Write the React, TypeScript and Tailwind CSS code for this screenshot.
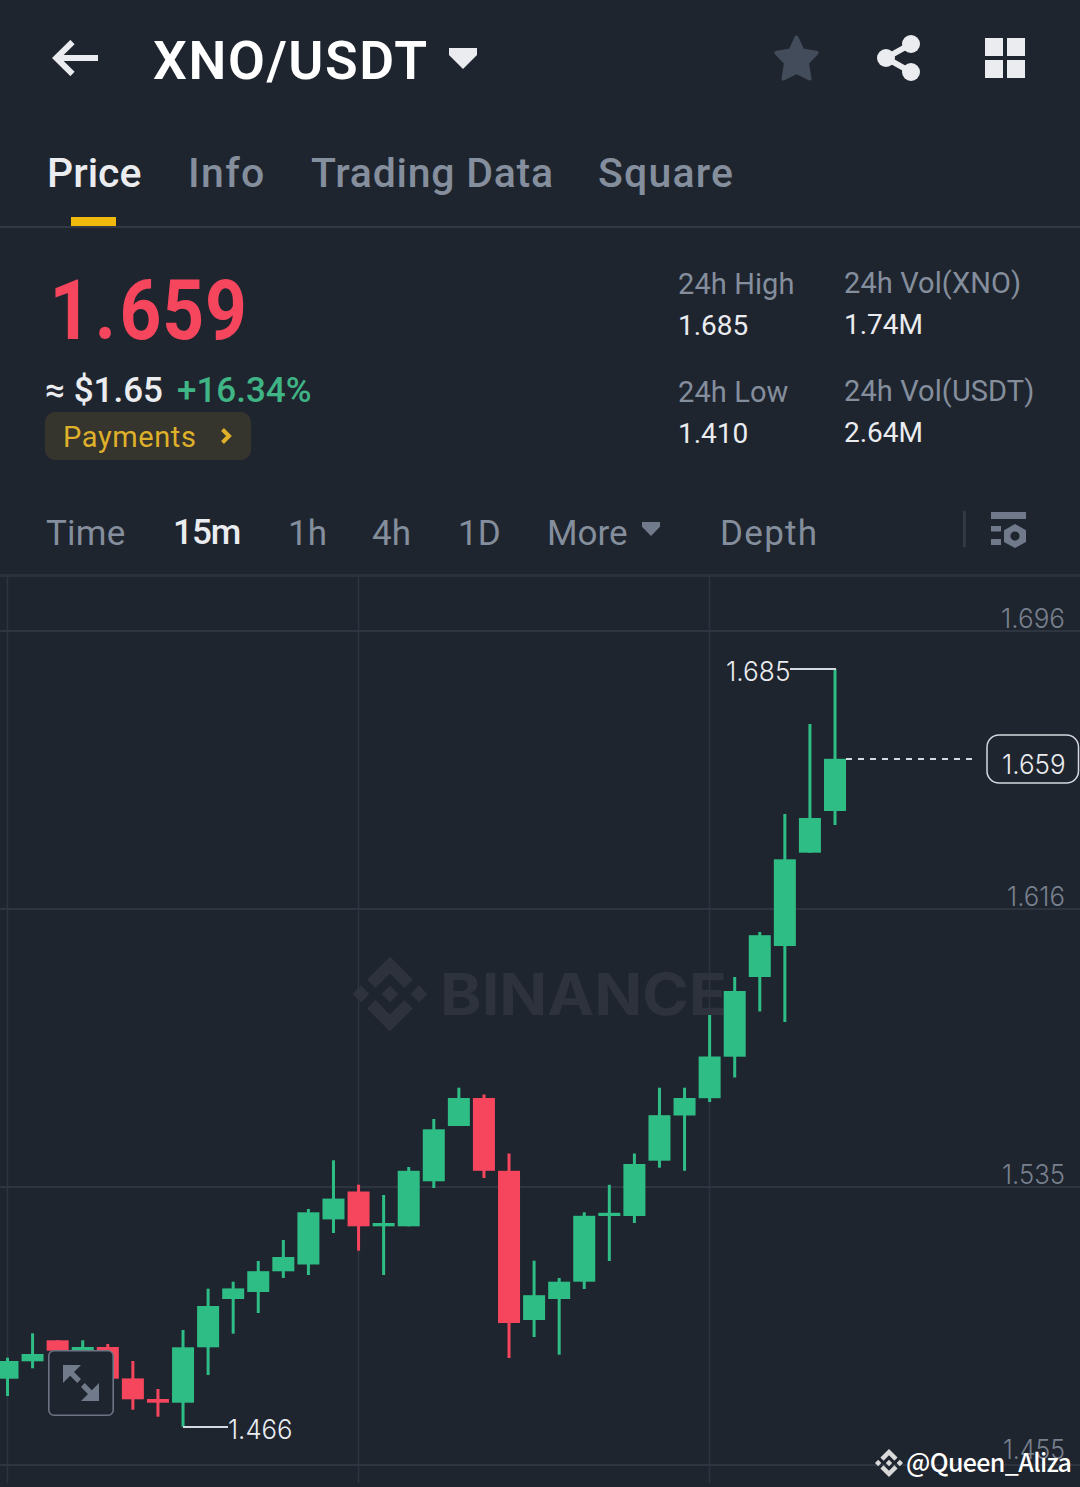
import React, { useState } from 'react';
import { SiBinance } from 'react-icons/si';

const tabs = [
  { name: 'Price', style: 'w-[141px]' },
  { name: 'Info', style: 'w-[123px] tracking-[1.4px]' },
  { name: 'Trading Data', style: 'w-[287px] tracking-[0.75px]' },
  { name: 'Square', style: 'w-[160px] tracking-[1.2px]' },
]

const stats = [
  { label: '24h High', value: '1.685', style: 'pt-[1px]' },
  { label: '24h Vol(XNO)', value: '1.74M', style: '' },
  { label: '24h Low', value: '1.410', style: 'pt-[1px]' },
  { label: '24h Vol(USDT)', value: '2.64M', style: '' },
]

const intervals = [
  { name: 'Time', style: 'w-[127px] tracking-[0.2px]' },
  { name: '15m', style: 'w-[115px] tracking-[-1px]' },
  { name: '1h', style: 'w-[84px]' },
  { name: '4h', style: 'w-[86px]' },
  { name: '1D', style: 'w-[89px]' },
]

// high, body top, body bottom, low, falling
const candles: [number, number, number, number, boolean?][] = [
  [1357.7, 1361, 1378.7, 1396],
  [1333.3, 1354, 1361.3, 1368.3],
  [1340.3, 1340.3, 1350.7, 1350.7, true],
  [1340.3, 1347, 1358, 1362],
  [1344, 1347, 1378.7, 1378.7, true],
  [1361, 1378.4, 1399.3, 1409.7, true],
  [1389, 1399, 1402.7, 1416.7, true],
  [1330, 1347.3, 1402.7, 1426.7],
  [1288.7, 1306, 1347.3, 1375],
  [1281.7, 1288.4, 1299, 1333.7],
  [1261, 1271.2, 1292, 1313],
  [1240, 1257, 1271.3, 1278],
  [1209, 1212.3, 1264.5, 1275],
  [1160.3, 1198.6, 1219.4, 1233],
  [1184.7, 1191.5, 1226.3, 1250.7, true],
  [1195, 1223, 1226.3, 1275],
  [1167, 1170.8, 1226.3, 1226.3],
  [1119, 1129.3, 1181.3, 1188],
  [1087.7, 1098, 1126, 1126],
  [1094.5, 1098, 1170.8, 1178, true],
  [1153.5, 1170.8, 1323, 1358, true],
  [1260.7, 1295.2, 1320, 1337],
  [1278, 1281.7, 1299, 1354.7],
  [1212.3, 1215.8, 1281.7, 1289],
  [1184.8, 1212.8, 1216, 1261],
  [1153.5, 1164, 1216, 1223],
  [1087.7, 1115.2, 1160.7, 1167.7],
  [1087.7, 1098, 1115.5, 1170.8],
  [1015, 1056.5, 1098.2, 1102],
  [977, 991, 1056.7, 1077.5],
  [932, 935.2, 977, 1011.5],
  [814, 859.3, 946, 1022],
  [724, 818, 852.7, 852.7],
  [669, 758.8, 811, 825],
]

const levels = [
  { y: 631, text: '1.696', x: 1001, base: 628, length: 64 },
  { y: 909, text: '1.616', x: 1007, base: 906, length: 58 },
  { y: 1187, text: '1.535', x: 1002, base: 1184, length: 63 },
  { y: 1465, text: '1.455', x: 1003, base: 1459, length: 62 },
]

function Caret({ className }: { className: string }) {
  return (
    <svg className={className} viewBox="0 0 28 21" preserveAspectRatio="none" fill="currentColor">
      <path d="M0 0H28V7L14 21L0 7Z" />
    </svg>
  )
}

function Header() {
  return (
    <div className="flex h-[118px] items-center pl-[52px] pr-[55px] pb-[2px] text-[#eaecef]">
      <svg className="h-9 w-[46px]" viewBox="0 0 46 36" fill="none" stroke="currentColor" strokeWidth="6">
        <path d="M4 18H46M20.5 2L4.2 18L20.5 34" />
      </svg>
      <div className="ml-[55px] w-[274px] whitespace-nowrap pt-[5px] text-[53.5px] font-semibold leading-none tracking-[1.6px] text-white">
        XNO/USDT
      </div>
      <Caret className="ml-[22px] h-[21px] w-7" />
      <svg className="ml-auto h-[46px] w-[45px] text-[#434c5a]" viewBox="0 0 45 46" fill="currentColor" stroke="currentColor" strokeWidth="4" strokeLinejoin="round">
        <path d="M22.5 2.5L28.5 15.5L42.5 17.8L33 28L35.5 43.5L22.5 37L9.5 43.5L12 28L2.5 17.8L16.5 15.5Z" />
      </svg>
      <svg className="ml-[58px] h-[46px] w-[43px]" viewBox="0 0 43 46" fill="currentColor">
        <path d="M34 9L9 23L34 37" fill="none" stroke="currentColor" strokeWidth="6" />
        <circle cx="9" cy="23" r="9" />
        <circle cx="34" cy="9" r="9" />
        <circle cx="34" cy="37" r="9" />
      </svg>
      <div className="ml-[65px] grid grid-cols-2 gap-1">
        <div className="h-[18px] w-[18px] bg-current" />
        <div className="h-[18px] w-[18px] bg-current" />
        <div className="h-[18px] w-[18px] bg-current" />
        <div className="h-[18px] w-[18px] bg-current" />
      </div>
    </div>
  )
}

function Chart() {
  return (
    <svg
      className="block h-[910px] w-[1080px]"
      viewBox="0 577 1080 910"
      fontFamily="Inter, 'Liberation Sans', sans-serif"
      fontWeight={300}
      fontSize={26.5}
    >
      <SiBinance x={352.5} y={956.5} size={75} color="#2e323d" />
      <text x={440} y={1015} fill="#2e323d" fontWeight={700} fontSize={58} textLength={287} lengthAdjust="spacingAndGlyphs">BINANCE</text>

      <g stroke="#2f3540">
        {[7.5, 358.5, 709.5].map((x) => (
          <line key={x} x1={x} x2={x} y1={577} y2={1483} strokeWidth={1.5} />
        ))}
        {levels.map((level) => (
          <line key={level.y} x1={0} x2={1080} y1={level.y} y2={level.y} strokeWidth={2} />
        ))}
      </g>

      {levels.map((level) => (
        <text key={level.text} x={level.x} y={level.base} fill="#78808e" textLength={level.length} lengthAdjust="spacingAndGlyphs">{level.text}</text>
      ))}

      {candles.map(([high, top, bottom, low, falling], i) => {
        const x = 7.5 + i * 25.076
        return (
          <g key={i} fill={falling ? '#f6465d' : '#2ebd85'}>
            <rect x={x - 1.5} y={high} width={3} height={low - high} />
            <rect x={x - 11} y={top} width={22} height={bottom - top} />
          </g>
        )
      })}

      <g stroke="#d5d8de" strokeWidth={2}>
        <line x1={790} x2={836} y1={669} y2={669} />
        <line x1={183} x2={228} y1={1427} y2={1427} />
        <line x1={846} x2={973} y1={759} y2={759} strokeDasharray="6 6" />
        <rect x={987} y={735} width={91.5} height={48} rx={12} fill="none" strokeWidth={1.5} />
      </g>
      <g fill="#eaecef">
        <text x={726} y={681} textLength={64.5} lengthAdjust="spacingAndGlyphs">1.685</text>
        <text x={228} y={1439} textLength={64.5} lengthAdjust="spacingAndGlyphs">1.466</text>
        <text x={1002} y={774} textLength={63.5} lengthAdjust="spacingAndGlyphs">1.659</text>
      </g>

      <rect x={48.8} y={1350.8} width={64.4} height={64.4} rx={5} fill="#1f252f" stroke="#6c7484" strokeWidth={1.6} />
      <g fill="#717a8b">
        <path d="M0 0H18L11 7L18 14L14.3 18L7.2 10.8L0 18Z" transform="translate(63 1365)" />
        <path d="M0 0H18L11 7L18 14L14.3 18L7.2 10.8L0 18Z" transform="translate(99 1401) rotate(180)" />
      </g>

      <SiBinance x={875} y={1449} size={28} color="#d9d9d9" />
      <text x={906} y={1472} fill="#ffffff" fontFamily="'Noto Sans CJK SC', 'Noto Sans', sans-serif" fontWeight={500} fontSize={25} textLength={166}>@Queen_Aliza</text>
    </svg>
  )
}

export default function App() {
  const [tab, setTab] = useState('Price');
  const [interval, setInterval] = useState('15m');

  return (
    <div className="h-[1487px] w-[1080px] overflow-hidden bg-[#1f252f] font-[Roboto,sans-serif] text-[#848e9c]">
      <Header />

      <div className="flex h-[110px] border-b-2 border-[#333944] pl-[47px]">
        {tabs.map((item) => (
          <div
            key={item.name}
            className={`${item.style} ${tab === item.name ? 'text-[#eaecef]' : ''} relative cursor-pointer whitespace-nowrap pt-[31px] text-[41px] font-medium leading-[48px]`}
            onClick={() => setTab(item.name)}
          >
            {item.name}
            {tab === item.name && <div className="absolute bottom-0 left-6 h-[9px] w-[45px] bg-[#f0b90b]" />}
          </div>
        ))}
      </div>

      <div className="flex h-[262px] justify-between pl-[45px]">
        <div className="pt-[34px]">
          <div className="h-[98px] origin-left scale-x-[0.88] pl-[5px] text-[83px] font-bold leading-[98px] tracking-[1px] text-[#f6465d]">
            1<span className="px-[3px]">.</span>659
          </div>
          <div className="flex h-[52px] items-center pt-[10px] text-[35px] font-medium">
            <div className="w-[132px] whitespace-nowrap text-[#eaecef]">≈ $1.65</div>
            <div className="text-[#3fb485]">+16.34%</div>
          </div>
          <div className="flex h-12 w-[206px] items-center rounded-[10px] bg-[#35342d] pl-[18px] text-[29px] text-[#dfb02a]">
            <span className="w-[158px] pt-[3px] tracking-[0.6px]">Payments</span>
            <svg className="h-4 w-[11px]" viewBox="0 0 11 16" fill="none" stroke="currentColor" strokeWidth="4">
              <path d="M1.5 1.5L8 8L1.5 14.5" />
            </svg>
          </div>
        </div>

        <div className="grid grid-cols-[166px_236px] content-start pt-[34px]">
          {stats.map((item) => (
            <div key={item.label} className={`${item.style} h-[108px] whitespace-nowrap text-[29px] leading-[42px]`}>
              <div className="tracking-[0.1px]">{item.label}</div>
              <div className="text-[28px] text-[#eaecef]">{item.value}</div>
            </div>
          ))}
        </div>
      </div>

      <div className="flex h-[87px] items-center border-b-[3px] border-[#2b313c] pl-[46px] text-[35px]">
        {intervals.map((item) => (
          <div
            key={item.name}
            className={`${item.style} ${interval === item.name ? 'font-medium text-[#eaecef] pt-[2px]' : 'pt-1'} cursor-pointer`}
            onClick={() => setInterval(item.name)}
          >
            {item.name}
          </div>
        ))}
        <div className="w-[95px] pt-1">More</div>
        <Caret className="mb-1.5 h-3.5 w-[18px] text-[#717a8b]" />
        <div className="ml-[60px] pt-1 tracking-[1.3px]">Depth</div>
        <div className="ml-auto mb-1.5 h-9 w-[3px] bg-[#333944]" />
        <svg className="mb-1 ml-[25px] mr-[54px] h-9 w-[35px] text-[#717a8b]" viewBox="0 0 35 36" fill="currentColor">
          <path d="M0 0H35V7H0ZM0 14H10V19.5H0ZM0 27H10V33H0Z" />
          <path fillRule="evenodd" d="M24 12L35 18.2V30L24 36L13 30V18.2ZM24 19.5A4.6 4.6 0 1 0 24 28.7A4.6 4.6 0 1 0 24 19.5Z" />
        </svg>
      </div>

      <Chart />
    </div>
  )
}
